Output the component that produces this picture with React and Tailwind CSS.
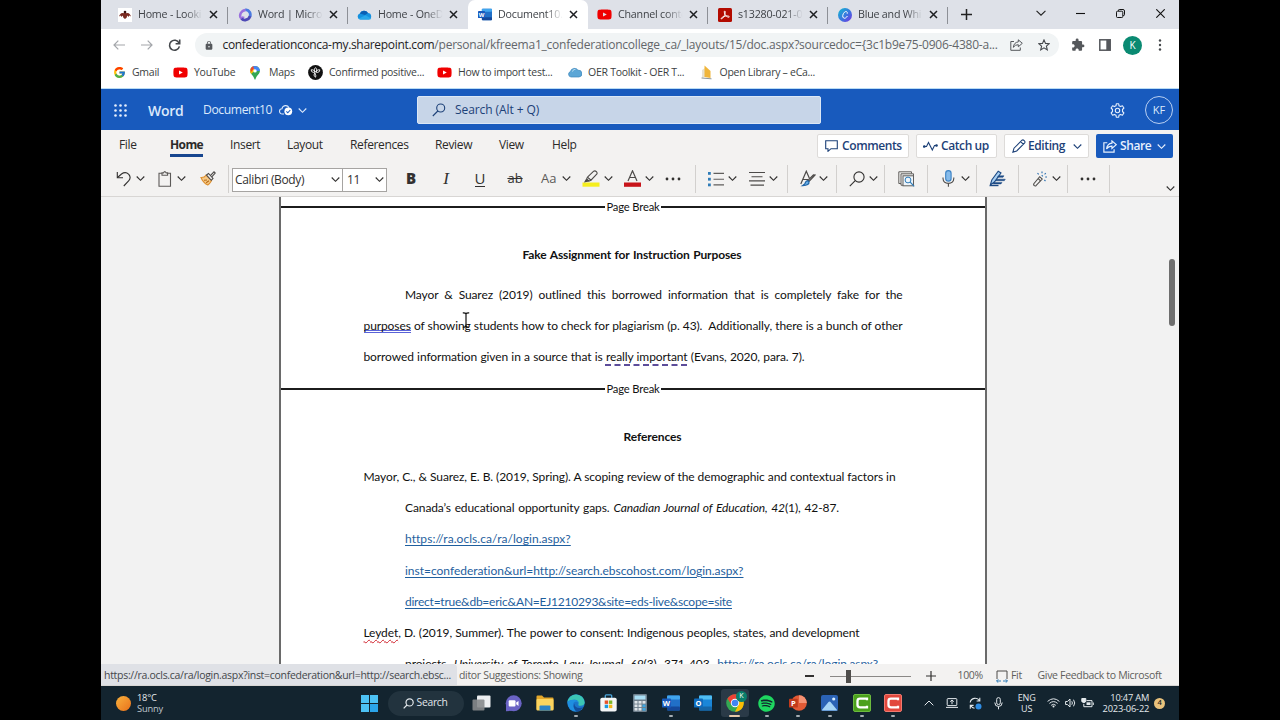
import React from "react";
import { FcGoogle } from "react-icons/fc";
import { FaYoutube, FaSpotify } from "react-icons/fa";
import { MdExtension, MdLock } from "react-icons/md";

const Chevron = ({ className = "" }) => (
  <svg className={`shrink-0 w-[9px] h-[9px] ${className}`} viewBox="0 0 9 9" fill="none" stroke="currentColor" strokeWidth="1.15">
    <path d="M0.7 2.5 L4.5 6.3 L8.3 2.5" />
  </svg>
);

const Sep = ({ className = "" }) => <div className={`shrink-0 w-px h-7 bg-[#d2d0ce] ${className}`} />;

/* ---------- brand icons ---------- */

const BirdIcon = () => (
  <svg className="w-[14px] h-[14px] bg-white" viewBox="0 0 14 14">
    <path d="M1 8.5 Q2.5 4 5.5 5.2 L7 3 L8.5 5.2 Q11.5 4 13 8.5 L11.2 7.4 L10.5 9 L9.2 7.5 L8.6 9.8 L7 11 L5.4 9.8 L4.8 7.5 L3.5 9 L2.8 7.4 Z" fill="#7a2a20" />
    <circle cx="7" cy="4" r="1.3" fill="#3a1512" />
  </svg>
);

const M365Icon = () => (
  <svg className="w-[14px] h-[14px]" viewBox="0 0 14 14" fill="none" strokeLinejoin="round">
    <path d="M7.8 1.9 Q4.5 2 2.8 5 Q1.2 8.5 3.3 10.3 Q5 11.3 5.3 8.5" stroke="#9a70de" strokeWidth="2.5" />
    <path d="M7.5 1.9 Q10 1.3 11.7 4.2 Q12.8 6.5 12 8.7" stroke="#4a7be0" strokeWidth="2.8" />
    <path d="M12 8.2 Q11 11.7 7.5 12 Q5 12.3 3.5 10.6" stroke="#4d49b5" strokeWidth="2.8" />
  </svg>
);

const OneDriveIcon = () => (
  <svg className="w-[15px] h-[10px]" viewBox="0 0 15 10">
    <path d="M3.4 9.6 A3.2 3.2 0 0 1 2.8 3.4 A4.6 4.6 0 0 1 11 3.1 A3.3 3.3 0 0 1 11.7 9.6 Z" fill="#1490df" />
    <path d="M2.8 3.4 A4.6 4.6 0 0 1 11 3.1 L8 5 Z" fill="#0a5fb4" />
    <path d="M1.3 8.8 L8.6 5.3 L14.2 8.4 Q13.4 9.6 11.7 9.6 H3.4 Q2 9.6 1.3 8.8Z" fill="#28a8ea" />
  </svg>
);

const OfficeIcon = ({ letter, dark, mid, light, badge, className }) => (
  <svg className={className} viewBox="0 0 18 16">
    <rect x="5" y="0.5" width="13" height="15" rx="1" fill={mid} />
    <rect x="5" y="0.5" width="13" height="4" rx="1" fill={light} />
    <rect x="5" y="11.5" width="13" height="4" rx="1" fill={dark} />
    <rect x="0" y="3.6" width="9" height="9" rx="0.9" fill={badge} />
    <text x="4.5" y="10.8" textAnchor="middle" fontSize="7.5" fontWeight="700" fill="#fff" fontFamily="Open Sans, sans-serif">{letter}</text>
  </svg>
);

const WordIcon = ({ className }) => (
  <OfficeIcon letter="W" dark="#15489a" mid="#2170c8" light="#41a5ee" badge="#185abd" className={className} />
);

const PdfIcon = () => (
  <svg className="w-[14px] h-[14px]" viewBox="0 0 14 14">
    <rect width="14" height="14" rx="1.5" fill="#b30b00" />
    <path d="M6.7 3 C7.6 3 7.3 5.6 6.4 7.4 C5.4 9.6 4 11.2 3.2 10.8 C2.5 10.2 5.3 8.3 8 8 C10.3 7.7 11.6 8.3 11.2 9.1 C10.7 9.8 8.4 8.6 7.3 7 C6.3 5.5 6 3 6.7 3Z" fill="none" stroke="#fff" strokeWidth="0.95" />
  </svg>
);

const CanvaIcon = () => (
  <svg className="w-[14px] h-[14px]" viewBox="0 0 14 14">
    <defs>
      <linearGradient id="canva" x1="0" y1="0" x2="1" y2="1">
        <stop offset="0" stopColor="#10bcd0" />
        <stop offset="0.55" stopColor="#3a74e0" />
        <stop offset="1" stopColor="#7a2fe0" />
      </linearGradient>
    </defs>
    <circle cx="7" cy="7" r="7" fill="url(#canva)" />
    <path d="M9.3 5.3 C9.6 3.4 8 3 6.5 4.2 C4.6 5.8 4 9.2 5.7 10.1 C7 10.7 8.5 9.6 9.2 8.4" fill="none" stroke="#fff" strokeWidth="1" strokeLinecap="round" />
  </svg>
);

const YouTube = () => (
  <div className="flex h-[15px] w-[15px] shrink-0 items-center justify-center">
    <FaYoutube className="h-[15px] w-[15px] shrink-0 text-[#f00000]" />
  </div>
);

const MapsPin = () => (
  <svg className="w-[10px] h-[14px]" viewBox="0 0 10 14">
    <clipPath id="pin"><path d="M5 0 A4.9 4.9 0 0 1 9.9 5 C9.9 8 6.4 9.5 5.5 13.3 Q5 14.2 4.5 13.3 C3.6 9.5 0.1 8 0.1 5 A4.9 4.9 0 0 1 5 0Z" /></clipPath>
    <g clipPath="url(#pin)">
      <rect width="10" height="14" fill="#34a853" />
      <path d="M0 0 H10 L0 9Z" fill="#fbbc04" />
      <path d="M0 0 H6 L1 6Z" fill="#ea4335" />
      <path d="M3 0 H10 V5 L5 5Z" fill="#4285f4" />
    </g>
    <circle cx="5" cy="4.9" r="1.7" fill="#fff" />
  </svg>
);

const TrilliumIcon = () => (
  <svg className="w-[15px] h-[15px]" viewBox="0 0 15 15">
    <circle cx="7.5" cy="7.5" r="7.4" fill="#111" />
    <path d="M7.5 7 C5.8 5.7 6 4 7.5 2.6 C9 4 9.2 5.7 7.5 7Z M7 7.8 C7 10 8.6 10 7.5 12.2 C5.5 11 5.8 9.4 7 7.8Z" fill="none" stroke="#fff" strokeWidth="0.9" />
    <path d="M6.8 7.3 C4.6 7.8 3.3 6.8 3.2 4.8 C5.3 4.5 6.6 5.4 6.8 7.3Z M8.2 7.3 C10.4 7.8 11.7 6.8 11.8 4.8 C9.7 4.5 8.4 5.4 8.2 7.3Z" fill="none" stroke="#fff" strokeWidth="0.9" />
  </svg>
);

const CloudBookmark = () => (
  <svg className="w-[14px] h-[11px]" viewBox="0 0 14 11">
    <path d="M3 10 A2.8 2.8 0 0 1 2.4 4.6 A4.2 4.2 0 0 1 10 3.2 A3.4 3.4 0 0 1 11 10 Z" fill="#5ba6d6" stroke="#3d86bb" strokeWidth="0.7" />
    <path d="M4.5 4.6 A3 3 0 0 1 7.5 2.2" fill="none" stroke="#b8dcf0" />
  </svg>
);

const BookBookmark = () => (
  <svg className="w-[11px] h-[15px]" viewBox="0 0 11 15">
    <path d="M1 5 L4 3 V12 L1 13Z" fill="#e8e2d0" />
    <path d="M3.5 0.5 L9.5 6 V13 L3.5 12Z" fill="#f0b53a" />
    <path d="M0.5 13 L10.5 13.8" stroke="#8d9699" strokeWidth="1" />
  </svg>
);

/* ---------- browser chrome ---------- */

const tabs = [
  { title: "Home - Looki", icon: <BirdIcon />, sep: true },
  { title: "Word | Micros", icon: <M365Icon />, sep: true },
  { title: "Home - OneD", icon: <OneDriveIcon /> },
  { title: "Document10.c", icon: <WordIcon className="w-[14px] h-[13px]" />, active: true },
  { title: "Channel conte", icon: <YouTube />, sep: true },
  { title: "s13280-021-0", icon: <PdfIcon />, sep: true },
  { title: "Blue and Whi", icon: <CanvaIcon />, sep: true },
];

const Tab = ({ title, icon, active, sep }) => (
  <div className={`relative flex h-full w-[120px] shrink-0 items-center pl-[9.5px] ${active ? "rounded-t-[7px] bg-white" : ""}`}>
    <div className="flex w-[15px] shrink-0 justify-center">{icon}</div>
    <div className="ml-[6px] w-[66px] whitespace-nowrap text-[10.7px] tracking-[-0.22px] text-[#3f4247] [mask-image:linear-gradient(to_right,black_72%,transparent_98%)]">{title}</div>
    <svg className="ml-[5px] w-[9px] h-[9px] shrink-0" viewBox="0 0 9 9" stroke="#1d1f22" strokeWidth="1.5">
      <path d="M1 1 L8 8 M8 1 L1 8" />
    </svg>
    {sep && <div className="absolute right-0 top-[7px] h-[17px] w-px bg-[#8d9096]" />}
  </div>
);

const TabStrip = () => (
  <div className="flex h-[29px] items-center bg-[#dee1e8] pl-[6.5px]">
    {tabs.map((tab) => <Tab key={tab.title} {...tab} />)}
    <svg className="ml-[13.5px] w-[11px] h-[11px]" viewBox="0 0 11 11" stroke="#222" strokeWidth="1.5"><path d="M5.5 0 V11 M0 5.5 H11" /></svg>
    <svg className="mb-[3px] ml-[64px] w-[10px] h-[10px]" viewBox="0 0 9 9" fill="none" stroke="#222" strokeWidth="1"><path d="M0.5 2.5 L4.5 6.5 L8.5 2.5" /></svg>
    <svg className="mb-[3px] ml-[30px] w-[9px] h-[9px]" viewBox="0 0 9 9" stroke="#111" strokeWidth="1.1"><path d="M0 4.5 H9" /></svg>
    <svg className="mb-[3px] ml-[31px] w-[9px] h-[9px]" viewBox="0 0 9 9" fill="none" stroke="#111" strokeWidth="1">
      <rect x="0.5" y="2.2" width="6.3" height="6.3" rx="1" />
      <path d="M2.5 2 V1.3 Q2.5 0.5 3.3 0.5 H7 Q8.5 0.5 8.5 2 V5.7 Q8.5 6.6 7.2 6.6" />
    </svg>
    <svg className="mb-[3px] ml-[31px] w-[9px] h-[9px]" viewBox="0 0 9 9" stroke="#111" strokeWidth="1.1"><path d="M0.3 0.3 L8.7 8.7 M8.7 0.3 L0.3 8.7" /></svg>
  </div>
);

const AddressBar = () => (
  <div className="flex h-[32px] items-center bg-white [&>svg]:shrink-0">
    <svg className="ml-[12px] w-[12px] h-[10px]" viewBox="0 0 12 10" fill="none" stroke="#a3a6aa" strokeWidth="1.2"><path d="M12 5 H1 M5.3 0.7 L1 5 L5.3 9.3" /></svg>
    <svg className="ml-[16px] w-[12px] h-[10px]" viewBox="0 0 12 10" fill="none" stroke="#a3a6aa" strokeWidth="1.2"><path d="M0 5 H11 M6.7 0.7 L11 5 L6.7 9.3" /></svg>
    <svg className="ml-[15px] w-[13px] h-[13px]" viewBox="0 0 13 13" fill="none" stroke="#45484c" strokeWidth="1.6">
      <path d="M11 4 A5 5 0 1 0 11.4 7.4" /><path d="M11.7 0.6 V4.7 H7.6" />
    </svg>
    <div className="ml-[14px] flex h-[24px] w-[864px] shrink-0 items-center rounded-full bg-[#f1f4f5] [&>svg]:shrink-0">
      <MdLock className="ml-[9px] h-[11px] w-[10px] text-[#55585c]" />
      <div className="ml-[8.5px] w-[781px] shrink-0 whitespace-nowrap text-[12px] text-[#63666a]">
        <span className="tracking-[-0.32px] text-[#1f2124]">confederationconca-my.sharepoint.com</span>
        <span className="tracking-[-0.22px]">/personal/kfreema1_confederationcollege_ca/_layouts/15/doc.aspx?sourcedoc=&#123;3c1b9e75-0906-4380-a...</span>
      </div>
      <svg className="ml-[6px] w-[13px] h-[12px]" viewBox="0 0 13 12" fill="none" stroke="#55585c" strokeWidth="1">
        <path d="M4 2.5 H0.8 V11.3 H10.3 V8.5" /><path d="M8.3 0.8 L12.3 4.3 L8.3 7.8 V5.7 Q5.3 5.5 3.3 8.3 Q3.9 3.4 8.3 2.9Z" />
      </svg>
      <svg className="ml-[15px] w-[12px] h-[12px]" viewBox="0 0 12 12" fill="none" stroke="#45484c" strokeWidth="1.1">
        <path d="M6 0.9 L7.5 4.4 L11.3 4.7 L8.4 7.2 L9.3 10.9 L6 8.9 L2.7 10.9 L3.6 7.2 L0.7 4.7 L4.5 4.4Z" />
      </svg>
    </div>
    <MdExtension className="ml-[12px] h-[14px] w-[14px] text-[#55585c]" />
    <svg className="ml-[14px] w-[12px] h-[12px]" viewBox="0 0 12 12"><rect x="0.8" y="0.8" width="10.4" height="10.4" fill="none" stroke="#55585c" strokeWidth="1.5" /><rect x="7.3" y="0.8" width="4" height="10.4" fill="#55585c" /></svg>
    <div className="ml-[12px] flex h-[19px] w-[19px] items-center justify-center rounded-full bg-[#0a8a72] text-[10px] text-white">K</div>
    <svg className="ml-[16px] w-[4px] h-[12px]" viewBox="0 0 4 12" fill="#45484c"><circle cx="2" cy="1.5" r="1.2" /><circle cx="2" cy="6" r="1.2" /><circle cx="2" cy="10.5" r="1.2" /></svg>
  </div>
);

const Bookmarks = () => (
  <div className="flex h-[27px] items-center bg-white pb-[4px] text-[10.5px] tracking-[-0.27px] whitespace-nowrap text-[#3c3f43] [&>*]:shrink-0">
    <FcGoogle className="ml-[11.5px] h-[13px] w-[13px]" />
    <span className="ml-[6.5px] w-[41px]">Gmail</span>
    <YouTube />
    <span className="ml-[6px] w-[56px]">YouTube</span>
    <MapsPin />
    <span className="ml-[9px] w-[39px]">Maps</span>
    <TrilliumIcon />
    <span className="ml-[6px] w-[108px]">Confirmed positive...</span>
    <YouTube />
    <span className="ml-[6px] w-[109.5px]">How to import test...</span>
    <CloudBookmark />
    <span className="ml-[6.5px] w-[113px]">OER Toolkit - OER T...</span>
    <BookBookmark />
    <span className="ml-[7.5px]">Open Library – eCa...</span>
  </div>
);

/* ---------- Word header ---------- */

const WordHeader = () => (
  <div className="flex h-[42px] items-center border-t border-[#b9dcf5] bg-[#185abd] pt-px text-[#dbe9fb] [&>*]:shrink-0">
    <svg className="ml-[13px] w-[13px] h-[13px]" viewBox="0 0 13 13" fill="#e6effc">
      {[1.5, 6.5, 11.5].map((y) => [1.5, 6.5, 11.5].map((x) => <circle key={`${x}${y}`} cx={x} cy={y} r="1.3" />))}
    </svg>
    <span className="ml-[21px] w-[55px] text-[14px] font-semibold tracking-[-0.3px]">Word</span>
    <span className="w-[76px] whitespace-nowrap text-[12.2px] tracking-[-0.42px]">Document10</span>
    <svg className="w-[14px] h-[12px]" viewBox="0 0 14 12" fill="none" stroke="#dbe9fb" strokeWidth="1.1">
      <path d="M5 10 H3.3 A2.6 2.6 0 0 1 3 4.8 A3.7 3.7 0 0 1 10 3.7" />
      <circle cx="9.3" cy="7.3" r="3.9" fill="#fff" stroke="none" />
      <path d="M7.4 7.4 L8.8 8.8 L11.3 6" stroke="#185abd" />
    </svg>
    <Chevron className="ml-[5px]" />
    <div className="ml-[110px] flex h-[28px] w-[404px] items-center rounded-[2px] border border-[#dbe7f5] bg-[#c7d5e8] text-[#1d4178]">
      <svg className="ml-[14px] w-[14px] h-[14px]" viewBox="0 0 14 14" fill="none" stroke="#1d4178" strokeWidth="1.1"><circle cx="8.7" cy="5" r="4" /><path d="M5.8 8 L0.8 13" /></svg>
      <span className="ml-[9px] text-[12px] tracking-[-0.08px]">Search (Alt + Q)</span>
    </div>
    <svg className="ml-[289px] w-[15px] h-[15px]" viewBox="0 0 15 15" fill="none" stroke="#e6effc">
      <path strokeWidth="1.1" strokeLinejoin="round" d="M6.3 0.8 H8.7 L9 2.8 L10.6 3.6 L12.4 2.8 L13.9 5 L12.5 6.5 V8.5 L13.9 10 L12.4 12.2 L10.6 11.4 L9 12.3 L8.7 14.2 H6.3 L6 12.3 L4.4 11.4 L2.6 12.2 L1.1 10 L2.5 8.5 V6.5 L1.1 5 L2.6 2.8 L4.4 3.6 L6 2.8Z" />
      <circle cx="7.5" cy="7.5" r="2.2" strokeWidth="1.1" />
    </svg>
    <div className="ml-[20px] flex h-[28px] w-[28px] items-center justify-center rounded-full border border-[#b9d0f2] text-[11px]">KF</div>
  </div>
);

const RibbonTabs = () => (
  <div className="flex h-[33px] text-[12px] text-[#2b2a29] [&>*]:shrink-0">
    <div className="flex h-[29px] items-center whitespace-nowrap tracking-[-0.35px] [&>*]:shrink-0">
      <span className="ml-[18px] w-[51px]">File</span>
      <span className="w-[60px]">
        <span className="relative font-bold tracking-[-0.6px]">
          Home
          <span className="absolute -bottom-[4px] left-0 h-[2.5px] w-[33px] bg-[#17468f]" />
        </span>
      </span>
      <span className="w-[57px]">Insert</span>
      <span className="w-[63px]">Layout</span>
      <span className="w-[85px]">References</span>
      <span className="w-[64px]">Review</span>
      <span className="w-[53px]">View</span>
      <span className="w-[265px]">Help</span>
    </div>
    <div className="mt-[4px] flex h-[24px] text-[12px] font-semibold tracking-[-0.4px] whitespace-nowrap text-[#1d4178] [&>*]:shrink-0">
      <button className="flex w-[92px] items-center rounded-[2px] border border-[#dddbd9] bg-white pl-[7px] [&>*]:shrink-0">
        <svg className="w-[13px] h-[12px]" viewBox="0 0 13 12" fill="none" stroke="currentColor" strokeWidth="1.1"><path d="M0.7 0.7 H12.3 V8.7 H6 L3 11.3 V8.7 H0.7Z" /></svg>
        <span className="ml-[4px]">Comments</span>
      </button>
      <button className="ml-[7px] flex w-[81px] items-center rounded-[2px] border border-[#dddbd9] bg-white pl-[6px] [&>*]:shrink-0">
        <svg className="w-[15px] h-[11px]" viewBox="0 0 15 11" fill="none" stroke="currentColor" strokeWidth="1.1"><path d="M1 5.5 H3.5 L5.5 1.5 L9.3 9 L11.5 4.5 H13" /><circle cx="1.3" cy="5.5" r="0.8" fill="currentColor" /><circle cx="13.5" cy="4.5" r="0.8" fill="currentColor" /></svg>
        <span className="ml-[3px]">Catch up</span>
      </button>
      <button className="ml-[7px] flex w-[85px] items-center rounded-[2px] border border-[#dddbd9] bg-white pl-[7px] [&>*]:shrink-0">
        <svg className="w-[14px] h-[14px]" viewBox="0 0 14 14" fill="none" stroke="currentColor" strokeWidth="1.1"><path d="M0.9 13.1 L2 9.2 L10 1.2 Q11 0.4 12.2 1.6 Q13.5 2.9 12.7 3.9 L4.7 12 Z M8.7 2.6 L11.4 5.3" /></svg>
        <span className="ml-[2px] w-[45px] text-left">Editing</span>
        <Chevron />
      </button>
      <button className="ml-[7px] flex w-[77px] items-center rounded-[2px] bg-[#185abd] pl-[7px] text-[#e8f1fd] [&>*]:shrink-0">
        <svg className="w-[14px] h-[13px]" viewBox="0 0 13 12" fill="none" stroke="currentColor" strokeWidth="1.1">
          <path d="M4 2.5 H0.8 V11.3 H10.3 V8.5" /><path d="M8.3 0.8 L12.3 4.3 L8.3 7.8 V5.7 Q5.3 5.5 3.3 8.3 Q3.9 3.4 8.3 2.9Z" />
        </svg>
        <span className="ml-[3px] w-[37px] text-left">Share</span>
        <Chevron />
      </button>
    </div>
  </div>
);

const Dots = ({ className }) => (
  <svg className={`shrink-0 w-[16px] h-[4px] ${className}`} viewBox="0 0 16 4" fill="#323130"><circle cx="2" cy="2" r="1.4" /><circle cx="8" cy="2" r="1.4" /><circle cx="14" cy="2" r="1.4" /></svg>
);

const Toolbar = () => (
  <div className="flex h-[33px] items-center pb-[2px] text-[#323130] [&>*]:shrink-0">
    <svg className="ml-[15px] w-[16px] h-[16px]" viewBox="0 0 16 16" fill="none" stroke="currentColor" strokeWidth="1.1"><path d="M1.3 1 V6.7 H7" /><path d="M1.5 6.5 L5.5 3 Q9.5 0.2 12.8 3.3 Q15.5 6.7 12.6 10 L7.8 15" /></svg>
    <Chevron className="ml-[4px]" />
    <svg className="ml-[13px] w-[14px] h-[16px]" viewBox="0 0 14 16" fill="none" stroke="#5c5a58" strokeWidth="1.1"><path d="M4 2.3 H1 V15.3 H12.5 V2.3 H9.6" /><path d="M4 4.2 V1.9 H5.4 Q6.8 -0.6 8.2 1.9 H9.6 V4.2Z" /></svg>
    <Chevron className="ml-[5px]" />
    <svg className="ml-[14px] w-[16px] h-[15px]" viewBox="0 0 16 15" fill="none" strokeWidth="1.1"><path d="M1 6.5 Q4.5 6.7 6 4.2 L11.5 9.7 Q9.5 13 7.8 14 Q3 11.7 1 6.5Z" fill="#f6c987" stroke="#dd8f2d" /><path d="M4 9.2 L7 9 M6.2 11.8 L9 9.7" stroke="#b56a14" /><path d="M6.5 4 L8.5 2.5 L13 7.5 L11.3 9.3Z" fill="#f3f2f1" stroke="#4d4b49" /><path d="M10.3 4.6 L14 0.9 L15.2 2.1 L11.8 5.8" stroke="#4d4b49" /></svg>
    <Sep className="ml-[12px]" />
    <div className="mt-[2px] ml-[3px] flex h-[24px] w-[155px] items-center border border-[#a6a4a2] bg-white text-[12px] tracking-[-0.35px] [&>*]:shrink-0">
      <span className="ml-[2px] w-[96px] whitespace-nowrap">Calibri (Body)</span>
      <Chevron />
      <span className="ml-[2px] flex h-full w-[33px] items-center border-l border-[#a6a4a2] pl-[4px]">11</span>
      <Chevron />
    </div>
    <span className="ml-[16px] w-[16px] text-center text-[15px] font-extrabold">B</span>
    <span className="ml-[19px] w-[16px] text-center font-['Liberation_Serif',serif] text-[17px] italic">I</span>
    <span className="ml-[18px] flex w-[16px] justify-center"><span className="border-b border-current text-[15px] leading-[15px]">U</span></span>
    <span className="ml-[18px] w-[18px] text-center text-[13px] line-through">ab</span>
    <span className="ml-[17px] w-[18px] text-[13px] text-[#5c5a58]">Aa</span>
    <Chevron className="ml-[3px]" />
    <svg className="ml-[11px] w-[18px] h-[17px]" viewBox="0 0 18 17" fill="none" stroke="#4d4b49" strokeWidth="1.1"><rect x="0.5" y="12.5" width="17" height="4.2" fill="#f5ee1e" stroke="none" /><path d="M5.5 7.2 L11.7 1.2 Q13 0.3 14.4 1.7 Q15.6 3 14.7 4.2 L9 10.2Z" /><path d="M5.5 7.2 L4.6 9 L7 11 L9 10.2" /><path d="M4.6 9 L3 11.8 L6.8 11" fill="#4d4b49" /></svg>
    <Chevron className="ml-[4px]" />
    <svg className="ml-[11px] w-[17px] h-[17px]" viewBox="0 0 17 17" fill="none" stroke="#4d4b49" strokeWidth="1.2"><rect y="12.5" width="17" height="4.3" fill="#c8141a" stroke="none" /><path d="M4 11 L8.5 0.8 L13 11 M5.6 7.5 H11.4" /></svg>
    <Chevron className="ml-[4px]" />
    <Dots className="ml-[11px]" />
    <Sep className="ml-[14px]" />
    <svg className="ml-[12px] w-[16px] h-[16px]" viewBox="0 0 16 16"><g fill="#2f7cb8"><rect x="0" y="1" width="2.8" height="2.8" /><rect x="0" y="6.8" width="2.8" height="2.8" /><rect x="0" y="12.5" width="2.8" height="2.8" /></g><path d="M5.5 2.4 H16 M5.5 8.2 H16 M5.5 13.9 H16" stroke="#605e5c" strokeWidth="1.1" /></svg>
    <Chevron className="ml-[4px]" />
    <svg className="ml-[12px] w-[16px] h-[16px]" viewBox="0 0 16 16" stroke="#4d4b49" strokeWidth="1.1"><path d="M0 1.5 H16 M2.5 5.7 H13.5 M0 9.9 H16 M1.5 14.1 H15" /></svg>
    <Chevron className="ml-[4px]" />
    <Sep className="ml-[9px]" />
    <svg className="ml-[12px] w-[16px] h-[17px]" viewBox="0 0 16 17" fill="none" stroke="#4d4b49" strokeWidth="1.2"><path d="M0.8 14 L6.3 1.2 L9.5 8.5 M2.7 9.5 H8" /><path d="M15 5 L9.3 11.2 L7.5 10.8 L13.4 4.8Z" fill="#dcdad8" /><path d="M9 11.5 Q9.5 15.5 2.8 15.6 Q5.5 14 5.6 12 Q7 10 9 11.5Z" fill="#6aaee6" stroke="#2166a8" /></svg>
    <Chevron className="ml-[3px]" />
    <Sep className="ml-[8px]" />
    <svg className="ml-[12px] w-[16px] h-[16px]" viewBox="0 0 16 16" fill="none" stroke="currentColor" strokeWidth="1.1"><circle cx="10" cy="6" r="5.1" /><path d="M6.2 9.7 L0.8 15.2" /></svg>
    <Chevron className="ml-[4px]" />
    <Sep className="ml-[6px]" />
    <svg className="ml-[13px] w-[17px] h-[16px]" viewBox="0 0 17 16" fill="none" stroke="#605e5c" strokeWidth="1"><path d="M3 12.5 H0.8 V0.8 H13.5 V2.5 M5 14.2 H3 V2.8 H15.5 V5" /><rect x="5" y="4.8" width="10.5" height="10" fill="#eef5fb" /><circle cx="10" cy="9" r="2.9" stroke="#2f7cb8" /><path d="M12.2 11.2 L16.2 15.3" stroke="#2f7cb8" strokeWidth="1.2" /></svg>
    <Sep className="ml-[12px]" />
    <svg className="ml-[14px] w-[13px] h-[17px]" viewBox="0 0 13 17" fill="none" strokeWidth="1.1"><rect x="3.7" y="0.6" width="5.4" height="10.5" rx="2.7" fill="#86bbea" stroke="#3b82c4" /><path d="M1 7.5 V8.5 Q1.3 13.3 6.4 13.4 Q11.5 13.3 11.8 8.5 V7.5 M6.4 13.4 V16.8" stroke="#4d4b49" /></svg>
    <Chevron className="ml-[6px]" />
    <Sep className="ml-[6px]" />
    <svg className="ml-[12px] w-[17px] h-[17px]" viewBox="0 0 17 17" fill="none" stroke="#1d4a84" strokeWidth="1.1"><path d="M1.3 15 L2.8 10 L9.2 1.2 L12 3 L5.4 12Z" fill="#a9d0f2" /><path d="M9.5 5.8 H15 L14 7.3 H8.3Z M7.5 9.2 H16.3 L15.3 10.7 H6.3Z M5.2 12.4 H13 L12 13.9 H4Z" fill="#1d4a84" strokeWidth="0.5" /><path d="M1 15.5 H9.5" strokeWidth="1.4" /></svg>
    <Sep className="ml-[12px]" />
    <svg className="ml-[14px] w-[14px] h-[16px]" viewBox="0 0 14 16" fill="none" stroke="#4d4b49" strokeWidth="1.1"><path d="M1.2 14.5 Q0.2 13.5 1 12.5 L6.7 5.7 L9.2 8 L3 14.7 Q2 15.4 1.2 14.5Z" /><path d="M5.3 7.6 L7.5 9.8" /><path d="M4.5 2.2 l1.2 1.2 M9 0.5 v1.8 M12.8 2.2 l-1.2 1.2 M12.2 6 h1.8 M11.3 8.8 l1.2 1.2 M8.7 4.2 l1.2 1.2" stroke="#2b6fb0" /></svg>
    <Chevron className="ml-[5px]" />
    <Sep className="ml-[6px]" />
    <Dots className="ml-[12px]" />
    <Sep className="ml-[13px]" />
    <Chevron className="mt-[20px] ml-[56px]" />
  </div>
);

/* ---------- document ---------- */

const PageBreak = ({ rule }) => (
  <div className="flex h-[20px] items-center whitespace-nowrap">
    <div className={`flex-1 bg-[#1c1c1c] ${rule}`} />
    <span className="w-[56px] text-center text-[11.2px] leading-[20px] tracking-[-0.15px]">Page Break</span>
    <div className={`flex-1 bg-[#1c1c1c] ${rule}`} />
  </div>
);

// every line is stretched to its own measured width
const Line = ({ className = "", children }) => (
  <div className={`h-[31.15px] leading-[31.15px] whitespace-nowrap [text-align-last:justify] ${className}`}>{children}</div>
);

const Document = () => (
  <div className="relative flex h-[468px] shrink-0 overflow-hidden border-t border-[#d8d6d4] bg-[#f2f2f2]">
    <div className="ml-[178px] h-full w-[708px] shrink-0 overflow-hidden border-x-2 border-[#6a6a6a] bg-white font-['Lato','Open_Sans',sans-serif] text-[12px] tracking-[-0.1px] text-[#111]">
      <PageBreak rule="h-[2px]" />
      <div className="mt-[22px] pl-[82.5px]">
        <Line className="ml-[159px] w-[219px] font-bold tracking-[-0.13px]">Fake Assignment for Instruction Purposes</Line>
        <div className="h-[9px]" />
        <Line className="ml-[41.5px] w-[497.5px]">Mayor &amp; Suarez (2019) outlined this borrowed information that is completely fake for the</Line>
        <Line className="w-[539px]"><span className="inline-block h-[15px] border-b-[3px] border-double border-[#5a63d8] leading-[15px]">purposes</span> of showing students how to check for plagiarism (p. 43).&nbsp; Additionally, there is a bunch of other</Line>
        <Line className="w-[441px]">borrowed information given in a source that is <span className="underline decoration-[#5c4d9a] decoration-dashed decoration-[1.5px] underline-offset-[3px]">really important</span> (Evans, 2020, para. 7).</Line>
      </div>
      <div className="h-[6.5px]" />
      <PageBreak rule="h-[1.5px]" />
      <div className="mt-[22px] pl-[82.5px]">
        <Line className="ml-[260px] w-[58px] font-bold">References</Line>
        <div className="h-[9px]" />
        <Line className="w-[532px]">Mayor, C., &amp; Suarez, E. B. (2019, Spring). A scoping review of the demographic and contextual factors in</Line>
        <Line className="ml-[41.5px] w-[434px]">Canada’s educational opportunity gaps. <i>Canadian Journal of Education, 42</i>(1), 42-87.</Line>
        <div className="text-[#1f5f9e] underline underline-offset-2">
          <Line className="ml-[41.5px] w-[166px] tracking-[0.05px]">https://ra.ocls.ca/ra/login.aspx?</Line>
          <Line className="ml-[41.5px] w-[339px] tracking-[-0.02px]">inst=confederation&amp;url=http://search.ebscohost.com/login.aspx?</Line>
          <Line className="ml-[41.5px] w-[327px] tracking-[-0.24px]">direct=true&amp;db=eric&amp;AN=EJ1210293&amp;site=eds-live&amp;scope=site</Line>
        </div>
        <Line className="w-[496px]"><span className="underline decoration-[#d0222c] decoration-wavy decoration-[1px] underline-offset-2">Leydet</span>, D. (2019, Summer). The power to consent: Indigenous peoples, states, and development</Line>
        <Line className="ml-[41.5px] w-[473px]">projects. <i>University of Toronto Law Journal, 69</i>(3), 371-403. <span className="text-[#1f5f9e] underline underline-offset-2">https://ra.ocls.ca/ra/login.aspx?</span></Line>
      </div>
    </div>
    <div className="ml-[182px] mt-[62px] h-[67px] w-[6px] shrink-0 rounded-full bg-[#6f6f6f]" />
    {/* text cursor */}
    <svg className="absolute left-[361px] top-[115px] w-[8px] h-[16px]" viewBox="0 0 8 16" fill="none" stroke="#111" strokeWidth="1.2"><path d="M0.8 0.8 Q4 0.6 4 2.5 Q4 0.6 7.2 0.8 M4 2 V14 M0.8 15.2 Q4 15.4 4 13.5 Q4 15.4 7.2 15.2" /></svg>
  </div>
);

const StatusBar = () => (
  <div className="flex h-[22px] shrink-0 items-center overflow-hidden border-b border-[#d8d6d4] bg-[#f3f2f1] text-[10.5px] tracking-[-0.32px] whitespace-nowrap text-[#605e5c] [&>*]:shrink-0">
    <div className="flex h-full w-[356px] items-center rounded-tr-[4px] bg-[#dfe1e6] pt-[3px] pl-[3px] tracking-[-0.29px] text-[#44474b]">https://ra.ocls.ca/ra/login.aspx?inst=confederation&amp;url=http://search.ebsc...</div>
    <span className="ml-[2px] w-[346px] pt-[3px]">ditor Suggestions: Showing</span>
    <div className="mt-[3px] h-[1.5px] w-[9px] bg-[#323130]" />
    <div className="mt-[3px] ml-[16px] flex h-[13px] w-[81px] items-center">
      <div className="h-px w-[16px] bg-[#8a8886]" />
      <div className="h-[13px] w-[5px] bg-[#4f4d4b]" />
      <div className="h-px flex-1 bg-[#8a8886]" />
    </div>
    <svg className="mt-[3px] ml-[15px] w-[10px] h-[10px]" viewBox="0 0 10 10" stroke="#323130" strokeWidth="1.2"><path d="M5 0 V10 M0 5 H10" /></svg>
    <span className="ml-[21.5px] w-[38.5px] pt-[3px]">100%</span>
    <svg className="mt-[3px] w-[12px] h-[13px]" viewBox="0 0 12 13" fill="none" stroke="#4d4b49"><path d="M1 9 V1 H11 V9" /><path d="M0.5 11 H5 M7 11 H11.5 M2.3 9.3 L0.6 11 L2.3 12.7 M9.7 9.3 L11.4 11 L9.7 12.7" stroke="#2f7cb8" /></svg>
    <span className="ml-[3px] w-[26.5px] pt-[3px]">Fit</span>
    <span className="pt-[3px]">Give Feedback to Microsoft</span>
  </div>
);

/* ---------- taskbar ---------- */

const apps = [
  { name: "taskview", icon: <svg className="w-[19px] h-[16px]" viewBox="0 0 19 16"><rect x="5" y="0.5" width="13.5" height="12" rx="1" fill="#eceef0" /><rect x="0.5" y="4.5" width="12" height="11" rx="1" fill="#87898c" opacity="0.9" /></svg> },
  { name: "chat", icon: <svg className="w-[17px] h-[17px]" viewBox="0 0 17 17"><circle cx="8.7" cy="8.3" r="8" fill="#6a63c4" /><path d="M1 16.2 V9 L7 15.8Z" fill="#6a63c4" /><rect x="3.7" y="5.3" width="6.8" height="6.2" rx="1" fill="#fff" /><path d="M11.2 7.6 L13.5 6 V11 L11.2 9.3Z" fill="#fff" /></svg> },
  { name: "explorer", icon: <svg className="w-[18px] h-[16px]" viewBox="0 0 18 16"><path d="M0.5 1.5 Q0.5 0.5 1.5 0.5 H6 L8 2.5 H16.5 Q17.5 2.5 17.5 3.5 V14.5 H0.5Z" fill="#e3a72b" /><rect x="0.5" y="4" width="17" height="11.5" rx="1" fill="#fbd45f" /><path d="M3.5 15.5 V11.5 Q3.5 10.5 4.5 10.5 H13.5 Q14.5 10.5 14.5 11.5 V15.5Z" fill="#2d83c6" /></svg> },
  { name: "edge", running: true, icon: <svg className="w-[18px] h-[18px]" viewBox="0 0 18 18"><circle cx="9" cy="9" r="8.7" fill="#1b76cb" /><path d="M0.4 8 A8.7 8.7 0 0 1 17.7 8.5 Q17.3 12 13 11.8 Q10.7 11.6 11.6 9.4 Q11.5 6 7.8 5.8 Q3 5.7 0.4 8Z" fill="#3cc6b4" /><path d="M0.4 8 Q3 5 7.8 5.8 Q11.5 6.5 11.6 9 Q9 6 6.5 9 Q5 12.5 9.5 17.5 Q1 17.5 0.4 8Z" fill="#1f8fe0" /><path d="M7.3 9.5 Q7.5 13.8 12.5 14 Q14.5 14 16 13.2 Q13.5 17.4 9.3 17.6 Q5.5 13.5 7.3 9.5Z" fill="#134f9c" /></svg> },
  { name: "store", icon: <svg className="w-[17px] h-[18px]" viewBox="0 0 17 18"><path d="M5.3 4 V1.7 Q5.3 0.8 6.2 0.8 H10.8 Q11.7 0.8 11.7 1.7 V4" fill="none" stroke="#4aa6dd" strokeWidth="1.3" /><rect x="0.3" y="3.7" width="16.4" height="13.8" rx="1.8" fill="#f4f6f7" /><path d="M4.7 6.5 h3.4 v3.4 h-3.4z" fill="#e8532a" /><path d="M8.9 6.5 h3.4 v3.4 h-3.4z" fill="#7db928" /><path d="M4.7 10.7 h3.4 v3.4 h-3.4z" fill="#1b9be3" /><path d="M8.9 10.7 h3.4 v3.4 h-3.4z" fill="#f5b81c" /></svg> },
  { name: "calculator", icon: <svg className="w-[14px] h-[18px]" viewBox="0 0 14 18"><rect width="14" height="18" rx="1.2" fill="#6f7f8c" /><rect x="1.5" y="1.5" width="11" height="4" fill="#a9def4" />{[7, 10.5, 14].map((y) => [1.5, 5.5, 9.5].map((x) => <rect key={`${x}-${y}`} x={x} y={y} width="3" height="2.6" fill={x > 9 && y > 7 ? "#3da5e0" : "#dfe5e9"} />))}</svg> },
  { name: "word", running: true, icon: <WordIcon className="w-[18px] h-[16px]" /> },
  { name: "outlook", icon: <OfficeIcon letter="O" dark="#1566a8" mid="#1a86d8" light="#4fbdf2" badge="#0f6cbd" className="w-[18px] h-[16px]" /> },
  { name: "chrome", active: true },
  { name: "spotify", running: true, icon: <FaSpotify className="h-[17px] w-[17px] text-[#1ed760]" /> },
  { name: "powerpoint", running: true, icon: <svg className="w-[18px] h-[16px]" viewBox="0 0 18 16"><circle cx="10" cy="8" r="7.8" fill="#e35a35" /><path d="M10 0.2 A7.8 7.8 0 0 1 17.8 8 H10Z" fill="#f59273" /><rect x="0" y="3.8" width="8.8" height="8.8" rx="0.9" fill="#c13a1b" /><text x="4.4" y="11" textAnchor="middle" fontSize="7.5" fontWeight="700" fill="#fff" fontFamily="Open Sans, sans-serif">P</text></svg> },
  { name: "photos", running: true, icon: <svg className="w-[17px] h-[16px]" viewBox="0 0 17 16"><rect width="17" height="16" rx="2" fill="#2b63b5" /><path d="M0.5 15.5 L7.5 7 Q8.5 6 9.5 7 L16.5 15.5Z" fill="#a6d5f5" /><circle cx="12.7" cy="4" r="1.6" fill="#d9efff" /></svg> },
  { name: "camtasia", running: true, icon: <CamtasiaIcon color="#4ba01c" edge="#6cbb3e" /> },
  { name: "recorder", running: true, icon: <CamtasiaIcon color="#e2483d" edge="#f07a70" /> },
];

function CamtasiaIcon({ color, edge }) {
  return (
    <svg className="w-[18px] h-[18px]" viewBox="0 0 18 18">
      <rect x="0.5" y="0.5" width="17" height="17" rx="1.5" fill={color} stroke={edge} />
      <path d="M14 6.3 V4.7 H7 Q4.5 4.7 4.5 7 V11 Q4.5 13.3 7 13.3 H14 V11.7" fill="none" stroke="#fff" strokeWidth="2.3" />
    </svg>
  );
}

const ChromeApp = () => (
  <div className="relative flex h-[28px] w-[28px] items-center justify-center rounded-[3px] bg-[#2a3a47]">
    <svg className="w-[18px] h-[18px]" viewBox="0 0 18 18">
      <circle cx="9" cy="9" r="8.8" fill="#34a853" />
      <path d="M1.4 4.6 A8.8 8.8 0 0 1 16.6 4.6 L9 5 L5.6 11Z" fill="#ea4335" />
      <path d="M16.6 4.6 A8.8 8.8 0 0 1 9 17.8 L12.4 11 L9 5Z" fill="#fbbc04" />
      <circle cx="9" cy="9" r="4.2" fill="#fff" />
      <circle cx="9" cy="9" r="3.3" fill="#4285f4" />
    </svg>
    <span className="absolute top-[2px] right-[2px] flex h-[11px] w-[11px] items-center justify-center rounded-full bg-[#0a7f6c] text-[7px] text-white">K</span>
    <span className="absolute bottom-0 h-[2px] w-[11px] rounded-full bg-[#e6c9a8]" />
  </div>
);

const Taskbar = () => (
  <div className="flex h-[34px] shrink-0 items-center bg-[#13242f] text-[#e3e8ec] [&>*]:shrink-0">
    <div className="ml-[15px] h-[15px] w-[15px] rounded-full bg-linear-to-br from-[#f8b13c] to-[#e8701a]" />
    <div className="ml-[6px] w-[222px] text-[9.3px] leading-[11.5px] tracking-[-0.2px]">
      <div>18°C</div>
      <div className="text-[#c1c8ce]">Sunny</div>
    </div>
    <svg className="ml-[1.5px] w-[17px] h-[17px]" viewBox="0 0 17 17" fill="#4cc2f5"><rect width="8" height="8" /><rect x="9" width="8" height="8" /><rect y="9" width="8" height="8" /><rect x="9" y="9" width="8" height="8" fill="#2ba5ea" /></svg>
    <div className="ml-[10px] flex h-[25px] w-[76px] items-center rounded-full bg-[#22333e]">
      <svg className="ml-[15px] w-[11px] h-[11px]" viewBox="0 0 11 11" fill="none" stroke="#e3e8ec" strokeWidth="1.2"><circle cx="6.6" cy="4.4" r="3.6" /><path d="M4 7 L0.7 10.3" /></svg>
      <span className="ml-[3px] text-[10.3px] tracking-[-0.25px]">Search</span>
    </div>
    <div className="ml-[2px] flex h-full">
      {apps.map((app) => (
        <div key={app.name} className="relative flex h-full w-[31.7px] items-center justify-center">
          {app.active ? <ChromeApp /> : app.icon}
          {app.running && <span className="absolute bottom-[3px] h-[2px] w-[4px] rounded-full bg-[#a5adb3]" />}
        </div>
      ))}
    </div>
    <svg className="ml-[15px] w-[10px] h-[6px]" viewBox="0 0 10 6" fill="none" stroke="currentColor"><path d="M0.7 5.3 L5 1 L9.3 5.3" /></svg>
    <svg className="ml-[12px] w-[12px] h-[10px]" viewBox="0 0 12 10" fill="none" stroke="currentColor"><rect x="1.2" y="0.6" width="9.6" height="7" rx="0.8" /><path d="M0 9.4 H12 M6 2 V6.2 M4.2 3.7 L6 2 L7.8 3.7" /></svg>
    <svg className="ml-[11px] w-[13px] h-[13px]" viewBox="0 0 13 13" fill="none" stroke="currentColor" strokeWidth="1.1"><path d="M1.2 5.5 A5 5 0 0 1 10.5 3.8 M10.8 0.8 V4 H7.6 M5.5 11.3 A5 5 0 0 1 1.8 8.5 M1.3 11.8 V8.4 H4.6" /><circle cx="9.5" cy="9.5" r="3" fill="#2f8de4" stroke="none" /></svg>
    <svg className="ml-[12px] w-[9px] h-[13px]" viewBox="0 0 9 13" fill="none" stroke="currentColor"><rect x="2.7" y="0.6" width="3.6" height="7" rx="1.8" /><path d="M0.8 5.5 Q0.8 9.5 4.5 9.5 Q8.2 9.5 8.2 5.5 M4.5 9.5 V12.3" /></svg>
    <div className="ml-[12.5px] w-[22px] text-center text-[9px] leading-[11.5px] tracking-[-0.2px]">ENG<br />US</div>
    <svg className="ml-[9.5px] w-[13px] h-[10px]" viewBox="0 0 13 10" fill="none" stroke="currentColor"><path d="M0.6 3.4 Q6.5 -1.8 12.4 3.4 M2.4 5.4 Q6.5 1.8 10.6 5.4 M4.2 7.3 Q6.5 5.3 8.8 7.3" /><circle cx="6.5" cy="8.6" r="1" fill="currentColor" stroke="none" /></svg>
    <svg className="ml-[4.5px] w-[11px] h-[10px]" viewBox="0 0 11 10" fill="none" stroke="currentColor"><path d="M0.6 3.5 H2.4 L5 1 V9 L2.4 6.5 H0.6Z M6.8 3.3 Q8 5 6.8 6.7 M8.5 1.7 Q11 5 8.5 8.3" /></svg>
    <svg className="ml-[5px] w-[13px] h-[10px]" viewBox="0 0 13 10" fill="none" stroke="currentColor"><path d="M5.5 2.6 H11 V8.7 H2.8 V6" /><rect x="5.5" y="4.3" width="4" height="2.7" fill="currentColor" stroke="none" /><path d="M12.3 4.5 V7" /><path d="M0.8 0.5 H4.8 V3.5 Q2.8 6 0.8 3.5Z" fill="currentColor" /></svg>
    <div className="w-[55.5px] text-right text-[9.3px] leading-[11.5px] tracking-[-0.2px] whitespace-nowrap">10:47 AM<br />2023-06-22</div>
    <div className="ml-[5px] flex h-[11px] w-[11px] items-center justify-center rounded-full bg-[#e9c27c] text-[7.5px] font-semibold text-[#222]">4</div>
  </div>
);

const App = () => {
  return (
    <div className="flex h-[720px] w-[1280px] justify-center overflow-hidden bg-black">
      <div className="flex w-[1078px] flex-col overflow-hidden bg-[#f3f2f1] font-['Open_Sans','Noto_Sans',sans-serif]">
        <TabStrip />
        <AddressBar />
        <Bookmarks />
        <div className="shrink-0">
          <WordHeader />
          <RibbonTabs />
          <Toolbar />
        </div>
        <Document />
        <StatusBar />
        <Taskbar />
      </div>
    </div>
  );
};

export default App;
